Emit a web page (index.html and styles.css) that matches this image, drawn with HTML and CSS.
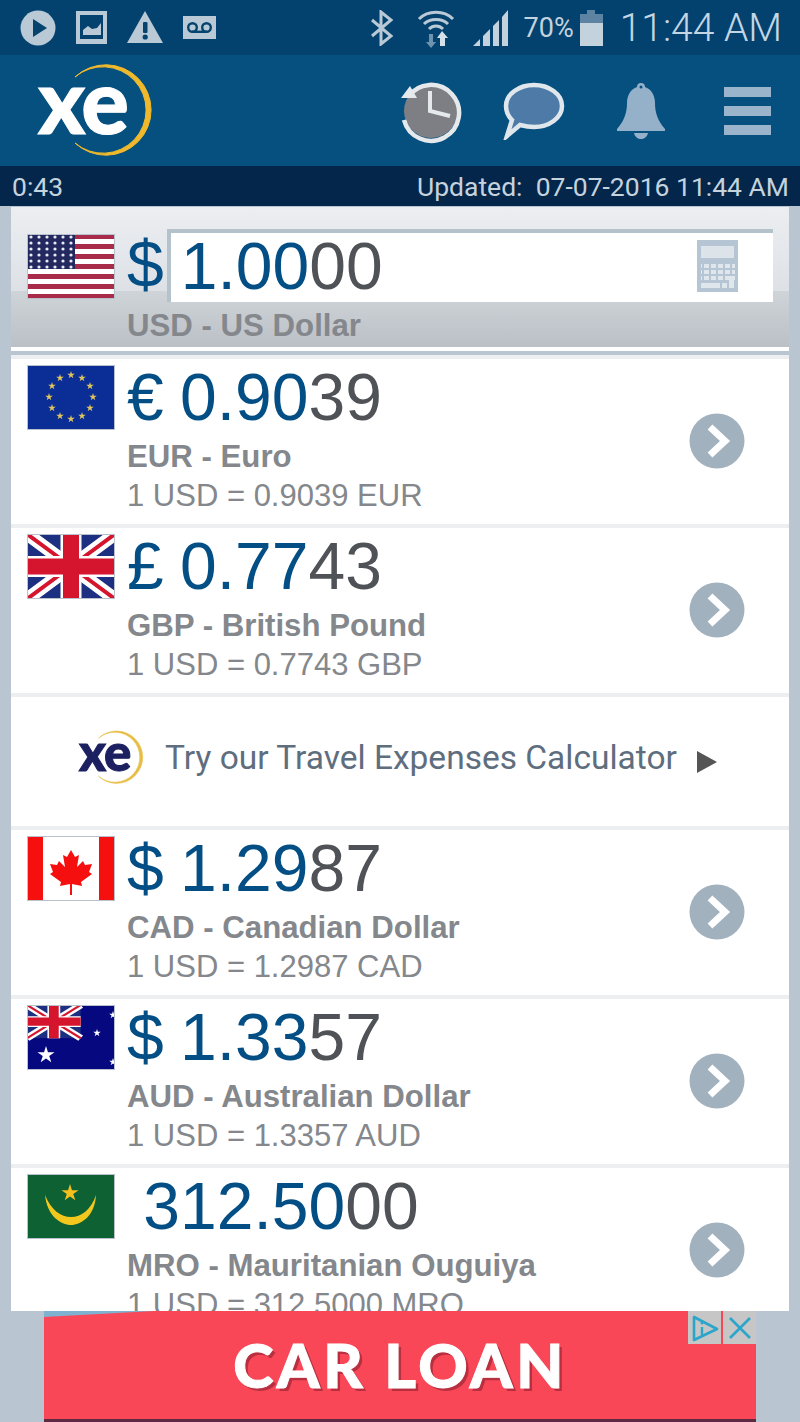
FILE: index.html
```html
<!DOCTYPE html>
<html lang="en">
<head>
    <meta charset="UTF-8">
    <meta name="viewport" content="width=device-width, initial-scale=1.0">
    <title>XE Currency</title>
    <link rel="stylesheet" href="styles.css">
</head>
<body>
    <div class="status-bar">
        <div class="status-left">
            <svg width="36" height="36" viewBox="0 0 36 36"><circle cx="18" cy="18" r="17.5" fill="#b9c9d6"/><path d="M13 9 L27 18 L13 27 Z" fill="#05446f"/></svg>
            <svg width="31" height="33" viewBox="0 0 31 33"><path d="M0 0H31V33H0Z M4 4V28H27V4Z" fill="#b9c9d6" fill-rule="evenodd"/><path d="M7 24V19L12 15L16 18L21 17L25 12V24Z" fill="#b9c9d6"/></svg>
            <svg width="36" height="33" viewBox="0 0 36 33"><path d="M18 0 L36 32 H0 Z" fill="#b9c9d6"/><rect x="16" y="11" width="4.5" height="11" rx="1" fill="#05446f"/><circle cx="18.2" cy="26" r="2.6" fill="#05446f"/></svg>
            <svg width="33" height="23" viewBox="0 0 33 23"><rect width="33" height="23" fill="#b9c9d6"/><circle cx="9.5" cy="11.5" r="4.3" fill="none" stroke="#05446f" stroke-width="2.4"/><circle cx="23.5" cy="11.5" r="4.3" fill="none" stroke="#05446f" stroke-width="2.4"/><rect x="9" y="14.6" width="15" height="2.4" fill="#05446f"/></svg>
        </div>
        <div class="status-right">
            <svg class="bt-icon" width="24" height="36" viewBox="0 0 24 36"><path d="M2 10 L21 26 L11 34 V2 L21 10 L2 26" fill="none" stroke="#b9c9d6" stroke-width="3"/></svg>
            <svg class="wifi-icon" width="38" height="40" viewBox="0 0 38 40"><g fill="none" stroke="#b9c9d6" stroke-width="3"><path d="M2 11 C11 2 27 2 36 11"/><path d="M7 16 C13 10 25 10 31 16"/><path d="M12 21 C16 17 22 17 26 21"/></g><path d="M12 26H16V34H19L14 40L9 34H12Z" fill="#6f93ae"/><path d="M25 23L31 30H28V38H23V30H20Z" fill="#d5e0e8"/></svg>
            <svg class="signal-icon" width="36" height="36" viewBox="0 0 36 36"><path d="M0 36L7 29V36Z M10 26L17 19V36H10Z M20 16L26 10V36H20Z M29 7L35 0V36H29Z" fill="#c4d2dd"/></svg>
            <span class="battery-pct">70%</span>
            <svg class="battery-icon" width="23" height="36" viewBox="0 0 23 36"><path d="M7 0H15V4H23V13H0V4H7Z" fill="#5d83a3"/><rect y="13" width="23" height="23" fill="#c4d2dd"/></svg>
            <span class="clock">11:44 AM</span>
        </div>
    </div>

    <div class="app-header">
        <div class="logo">
            <span class="logo-text">xe</span>
            <svg class="logo-arc" viewBox="0 0 115 95">
                <path d="M37 14 A45.2 45.2 0 1 1 37 80 A43.2 43.2 0 1 0 37 14 Z" fill="#f0b92c" stroke="#f0b92c" stroke-width="1"/>
            </svg>
        </div>
        <div class="header-icons">
            <svg width="66" height="66" viewBox="0 0 66 66"><circle cx="33" cy="33" r="27" fill="#7d7f85"/><path d="M10 19 A28 28 0 1 1 6 42" fill="none" stroke="#e6e9ec" stroke-width="4.5"/><path d="M3 20 L12 8 L19 20 Z" fill="#e6e9ec"/><path d="M32 13 V33 L52 38" fill="none" stroke="#e6e9ec" stroke-width="4"/></svg>
            <svg width="62" height="58" viewBox="0 0 62 58"><path d="M31 3 C46 3 59 12 59 24 C59 36 46 45 31 45 C26 45 21 44 17 43 L4 54 L9 38 C5 34 3 29 3 24 C3 12 16 3 31 3 Z" fill="#4d7aa6" stroke="#dfe6ec" stroke-width="4.5"/></svg>
            <svg width="48" height="56" viewBox="0 0 48 56"><path d="M24 0 C27 0 28 2 28 4 C34 6 38 12 38 20 C38 30 41 38 48 46 V48 H0 V46 C7 38 10 30 10 20 C10 12 14 6 20 4 C20 2 21 0 24 0 Z" fill="#95b1ca"/><circle cx="24" cy="4" r="1.5" fill="#05507f"/><path d="M17 50 H31 C30 54 27 56 24 56 C21 56 18 54 17 50 Z" fill="#95b1ca"/></svg>
            <div class="menu-icon"><span></span><span></span><span></span></div>
        </div>
    </div>

    <div class="sub-bar">
        <span>0:43</span>
        <span class="updated">Updated:&nbsp; 07-07-2016 11:44 AM</span>
    </div>

    <div class="main">
        <div class="base-row">
            <svg class="flag base-flag" viewBox="0 0 88 65" preserveAspectRatio="none">
                <defs>
                    <pattern id="usStars" width="8" height="6" patternUnits="userSpaceOnUse"><circle cx="4" cy="3" r="1.6" fill="#e8eaf4"/></pattern>
                </defs>
                <rect width="88" height="65" fill="#fff"/>
                <g fill="#a92b4a"><rect width="88" height="5"/><rect y="10" width="88" height="5"/><rect y="20" width="88" height="5"/><rect y="30" width="88" height="5"/><rect y="40" width="88" height="5"/><rect y="50" width="88" height="5"/><rect y="60" width="88" height="5"/></g>
                <rect width="48" height="35" fill="#23285f"/>
                <rect width="48" height="35" fill="url(#usStars)"/>
            </svg>
            <div class="base-body">
                <div class="base-top">
                    <span class="amount lead base-symbol">$</span>
                    <div class="amount-input">
                        <span class="amount"><span class="lead">1.00</span>00</span>
                        <svg width="41" height="52" viewBox="0 0 41 52">
                            <defs><pattern id="calcKeys" width="7" height="6" patternUnits="userSpaceOnUse"><rect width="5" height="4" fill="#dfe6ec"/></pattern></defs>
                            <rect width="41" height="52" fill="#b5c5d3"/>
                            <rect x="4" y="6" width="33" height="12" fill="#dce4ea"/>
                            <rect x="4" y="23" width="34" height="18" fill="url(#calcKeys)"/>
                            <rect x="4" y="43" width="19" height="5" fill="#dfe6ec"/>
                            <rect x="25" y="43" width="5" height="5" fill="#dfe6ec"/>
                            <rect x="32" y="36" width="5" height="12" fill="#dfe6ec"/>
                        </svg>
                    </div>
                </div>
                <div class="name">USD - US Dollar</div>
            </div>
        </div>

        <div class="rows">
            <div class="row">
                <svg class="flag" viewBox="0 0 88 65" preserveAspectRatio="none">
                    <defs><polygon id="star" points="0,-1 .22,-.31 .95,-.31 .36,.12 .59,.81 0,.38 -.59,.81 -.36,.12 -.95,-.31 -.22,-.31"/></defs>
                    <rect width="88" height="65" fill="#0b2e96"/>
                    <g fill="#e0c45c">
                        <use href="#star" transform="translate(44,10) scale(4)"/>
                        <use href="#star" transform="translate(55,13) scale(4)"/>
                        <use href="#star" transform="translate(63,21) scale(4)"/>
                        <use href="#star" transform="translate(66,32) scale(4)"/>
                        <use href="#star" transform="translate(63,43) scale(4)"/>
                        <use href="#star" transform="translate(55,51) scale(4)"/>
                        <use href="#star" transform="translate(44,54) scale(4)"/>
                        <use href="#star" transform="translate(33,51) scale(4)"/>
                        <use href="#star" transform="translate(25,43) scale(4)"/>
                        <use href="#star" transform="translate(22,32) scale(4)"/>
                        <use href="#star" transform="translate(25,21) scale(4)"/>
                        <use href="#star" transform="translate(33,13) scale(4)"/>
                    </g>
                </svg>
                <div class="row-body">
                    <div class="amount"><span class="lead">€ 0.90</span>39</div>
                    <div class="name">EUR - Euro</div>
                    <div class="rate">1 USD = 0.9039 EUR</div>
                </div>
                <svg class="go" width="56" height="56" viewBox="0 0 56 56"><circle cx="28" cy="28" r="27.5" fill="#a2b1be"/><path d="M21 14 L36 28 L21 42" fill="none" stroke="#fff" stroke-width="7"/></svg>
            </div>

            <div class="row">
                <svg class="flag" viewBox="0 0 88 65" preserveAspectRatio="none">
                    <g id="ukFlag">
                        <rect width="88" height="65" fill="#1d2f80"/>
                        <path d="M0 0L88 65M88 0L0 65" stroke="#fff" stroke-width="13"/>
                        <path d="M0 0L44 32.5M88 65L44 32.5M88 0L44 32.5M0 65L44 32.5" stroke="#d5152e" stroke-width="4"/>
                        <path d="M44 0V65M0 32.5H88" stroke="#fff" stroke-width="21"/>
                        <path d="M44 0V65M0 32.5H88" stroke="#d5152e" stroke-width="16"/>
                    </g>
                </svg>
                <div class="row-body">
                    <div class="amount"><span class="lead">£ 0.77</span>43</div>
                    <div class="name">GBP - British Pound</div>
                    <div class="rate">1 USD = 0.7743 GBP</div>
                </div>
                <svg class="go" width="56" height="56" viewBox="0 0 56 56"><circle cx="28" cy="28" r="27.5" fill="#a2b1be"/><path d="M21 14 L36 28 L21 42" fill="none" stroke="#fff" stroke-width="7"/></svg>
            </div>

            <div class="promo">
                <div class="logo promo-logo">
                    <span class="logo-text">xe</span>
                    <svg class="logo-arc" viewBox="0 0 115 95">
                        <path d="M37 14 A45.2 45.2 0 1 1 37 80 A43.2 43.2 0 1 0 37 14 Z" fill="#e8bd45" stroke="#e8bd45" stroke-width="1"/>
                    </svg>
                </div>
                <span class="promo-text">Try our Travel Expenses Calculator</span>
                <svg class="promo-arrow" width="20" height="22" viewBox="0 0 20 22"><path d="M0 0L20 11L0 22Z" fill="#555"/></svg>
            </div>

            <div class="row">
                <svg class="flag" viewBox="0 0 88 65" preserveAspectRatio="none">
                    <rect width="88" height="65" fill="#fff"/>
                    <rect width="16" height="65" fill="#f50f0f"/>
                    <rect x="72" width="16" height="65" fill="#f50f0f"/>
                    <path d="M44 14L48 21L52 19L50 31L56 25L58 29L65 28L62 36L65 38L54 46L55 50L45 48V59H43V48L33 50L34 46L23 38L26 36L23 28L30 29L32 25L38 31L36 19L40 21Z" fill="#f50f0f"/>
                </svg>
                <div class="row-body">
                    <div class="amount"><span class="lead">$ 1.29</span>87</div>
                    <div class="name">CAD - Canadian Dollar</div>
                    <div class="rate">1 USD = 1.2987 CAD</div>
                </div>
                <svg class="go" width="56" height="56" viewBox="0 0 56 56"><circle cx="28" cy="28" r="27.5" fill="#a2b1be"/><path d="M21 14 L36 28 L21 42" fill="none" stroke="#fff" stroke-width="7"/></svg>
            </div>

            <div class="row">
                <svg class="flag" viewBox="0 0 88 65" preserveAspectRatio="none">
                    <rect width="88" height="65" fill="#05087f"/>
                    <use href="#ukFlag" transform="scale(.61,.51)"/>
                    <g fill="#fff">
                        <use href="#star" transform="translate(19,50) scale(9)"/>
                        <use href="#star" transform="translate(70,28) scale(4)"/>
                        <use href="#star" transform="translate(86,10) scale(4)"/>
                        <use href="#star" transform="translate(86,57) scale(4)"/>
                    </g>
                </svg>
                <div class="row-body">
                    <div class="amount"><span class="lead">$ 1.33</span>57</div>
                    <div class="name">AUD - Australian Dollar</div>
                    <div class="rate">1 USD = 1.3357 AUD</div>
                </div>
                <svg class="go" width="56" height="56" viewBox="0 0 56 56"><circle cx="28" cy="28" r="27.5" fill="#a2b1be"/><path d="M21 14 L36 28 L21 42" fill="none" stroke="#fff" stroke-width="7"/></svg>
            </div>

            <div class="row">
                <svg class="flag" viewBox="0 0 88 65" preserveAspectRatio="none">
                    <rect width="88" height="65" fill="#0d6132"/>
                    <path d="M18 21C20 42 34 51 44 51C54 51 68 42 69 21C64 36 54 43 44 43C34 43 24 36 18 21Z" fill="#f2c81e"/>
                    <use href="#star" transform="translate(43,19) scale(9)" fill="#f5bf1e"/>
                </svg>
                <div class="row-body">
                    <div class="amount">&nbsp;<span class="lead">312.50</span>00</div>
                    <div class="name">MRO - Mauritanian Ouguiya</div>
                    <div class="rate">1 USD = 312.5000 MRO</div>
                </div>
                <svg class="go" width="56" height="56" viewBox="0 0 56 56"><circle cx="28" cy="28" r="27.5" fill="#a2b1be"/><path d="M21 14 L36 28 L21 42" fill="none" stroke="#fff" stroke-width="7"/></svg>
            </div>
        </div>
    </div>

    <div class="ad">
        <div class="ad-wedge"></div>
        <span class="ad-text">CAR LOAN</span>
        <div class="ad-controls">
            <div class="ad-btn"><svg width="28" height="28" viewBox="0 0 28 28"><path d="M3 3L26 15L3 26Z" fill="none" stroke="#2ba6cb" stroke-width="2.6" stroke-linejoin="round"/><path d="M11 13V21" stroke="#2ba6cb" stroke-width="2.4"/><circle cx="11" cy="9" r="1.5" fill="#2ba6cb"/></svg></div>
            <div class="ad-btn"><svg width="24" height="24" viewBox="0 0 24 24"><path d="M2 2L22 22M22 2L2 22" stroke="#2ba6cb" stroke-width="2.6"/></svg></div>
        </div>
    </div>
</body>
</html>
```

FILE: styles.css
```css
* {
    margin: 0;
    padding: 0;
    box-sizing: border-box;
}

body {
    width: 800px;
    height: 1422px;
    overflow: hidden;
    background: #b9c5d0;
    font-family: 'Liberation Sans', Arial, sans-serif;
    display: flex;
    flex-direction: column;
}

svg {
    display: block;
    flex-shrink: 0;
}

/* phone status bar */
.status-bar {
    height: 55px;
    background: #03426e;
    display: flex;
    justify-content: space-between;
    align-items: center;
    padding: 0 18px 0 20px;
}

.status-left {
    display: flex;
    align-items: center;
    gap: 20px;
}

.status-right {
    display: flex;
    align-items: center;
}

.wifi-icon {
    margin-left: 23px;
}

.signal-icon {
    margin-left: 18px;
}

.battery-pct {
    margin-left: 15px;
    font-family: Roboto, sans-serif;
    font-size: 27px;
    color: #c4d2dd;
}

.battery-icon {
    margin-left: 6px;
}

.clock {
    margin-left: 17px;
    font-family: Roboto, sans-serif;
    font-weight: 300;
    font-size: 39px;
    color: #c4d6e4;
}

/* app header */
.app-header {
    height: 111px;
    background: #05507f;
    display: flex;
    justify-content: space-between;
    align-items: center;
    padding: 0 29px 0 38px;
}

.logo {
    position: relative;
    width: 115px;
    height: 95px;
    padding-bottom: 22px;
    flex-shrink: 0;
    display: flex;
    align-items: center;
}

.logo-arc {
    position: absolute;
    top: 0;
    left: 0;
    width: 100%;
    height: 100%;
}

.logo-text {
    font-family: Lato, sans-serif;
    font-weight: 900;
    font-size: 89px;
    line-height: 95px;
    letter-spacing: -2px;
    color: #fff;
    -webkit-text-stroke: 1px #fff;
}

.promo-logo {
    width: 67px;
    height: 55px;
    padding: 0 0 12px 2px;
}

.promo-logo .logo-text {
    font-size: 51px;
    line-height: 55px;
    letter-spacing: -1px;
    color: #1c2060;
    -webkit-text-stroke: 1px #1c2060;
}

.header-icons {
    display: flex;
    align-items: center;
}

.header-icons svg:nth-child(2) {
    margin-left: 39px;
}

.header-icons svg:nth-child(3) {
    margin-left: 52px;
}

.menu-icon {
    margin-left: 59px;
    width: 47px;
    height: 48px;
    display: flex;
    flex-direction: column;
    justify-content: space-between;
}

.menu-icon span {
    height: 10px;
    background: #9ab5cb;
}

.sub-bar {
    height: 40px;
    background: #04264a;
    color: #c5d3df;
    font-family: Roboto, sans-serif;
    font-size: 26.5px;
    display: flex;
    justify-content: space-between;
    align-items: center;
    padding: 0 11px 0 12px;
}

/* currency list */
.main {
    height: 1105px;
    padding: 1px 11px 0;
    overflow: hidden;
}

.base-row {
    height: 144px;
    border-bottom: 4px solid #fff;
    padding: 22px 16px 0;
    display: flex;
    align-items: flex-start;
    gap: 12px;
    background: linear-gradient(#eceef1, #dde1e6 60%, #cfd4d9 60%, #bbc0c6);
}

.base-flag {
    margin-top: 5px;
}

.base-body {
    flex: 1;
}

.base-top {
    display: flex;
}

.base-symbol {
    margin-top: 3px;
}

.amount-input {
    flex: 1;
    height: 73px;
    margin-left: 3px;
    padding: 0 35px 4px 10px;
    background: #fff;
    border-top: 4px solid #b4c2cc;
    border-left: 4px solid #b4c2cc;
    display: flex;
    justify-content: space-between;
    align-items: center;
}

.amount {
    font-size: 66px;
    line-height: 64px;
    color: #4f5256;
    white-space: nowrap;
}

.row-body .amount {
    word-spacing: -2px;
}

.lead {
    color: #034f85;
}

.flag {
    width: 88px;
    height: 65px;
    flex-shrink: 0;
    outline: 1px solid #b9c2cc;
    outline-offset: -1px;
}

.name {
    font-size: 31.2px;
    line-height: 36px;
    font-weight: bold;
    color: #84878b;
    white-space: nowrap;
}

.base-body .name {
    margin-top: 6px;
}

.rows {
    margin-top: 4px;
    padding-top: 4px;
    background: #eceef0;
    display: flex;
    flex-direction: column;
    gap: 4px;
}

.row {
    height: 165px;
    flex-shrink: 0;
    background: #fff;
    padding: 6px 44px 0 16px;
    display: flex;
    align-items: flex-start;
    gap: 12px;
}

.row-body {
    flex: 1;
}

.row-body .name {
    margin-top: 10px;
}

.rate {
    margin-top: 3px;
    font-size: 31px;
    line-height: 36px;
    color: #84878b;
    white-space: nowrap;
}

.go {
    align-self: center;
    margin-top: -8px;
}

.promo {
    height: 129px;
    flex-shrink: 0;
    background: #fff;
    display: flex;
    align-items: center;
    justify-content: center;
    padding: 0 6px 8px 0;
}

.promo-text {
    margin: 0 20px 0 21px;
    font-family: Roboto, sans-serif;
    font-size: 33.5px;
    color: #5e6e7e;
    white-space: nowrap;
}

.promo-arrow {
    margin-top: 8px;
}

/* ad banner */
.ad {
    position: relative;
    height: 111px;
    margin: 0 44px;
    background: #f94757;
    border-bottom: 3px solid #5d2a42;
    display: flex;
    align-items: center;
    justify-content: center;
}

.ad-wedge {
    position: absolute;
    top: 0;
    left: 0;
    width: 110px;
    height: 6px;
    background: #7fb2d0;
    clip-path: polygon(0 0, 100% 0, 0 100%);
}

.ad-text {
    font-family: Lato, sans-serif;
    font-weight: 900;
    font-size: 61px;
    letter-spacing: 3.5px;
    color: #fff;
    -webkit-text-stroke: 1px #fff;
    text-shadow: 3px 3px 0 #b8303f;
    margin-top: -2px;
}

.ad-controls {
    position: absolute;
    top: 0;
    right: 0;
    display: flex;
    gap: 2px;
}

.ad-btn {
    width: 33px;
    height: 33px;
    background: #c6c6c6;
    display: flex;
    align-items: center;
    justify-content: center;
}
```
